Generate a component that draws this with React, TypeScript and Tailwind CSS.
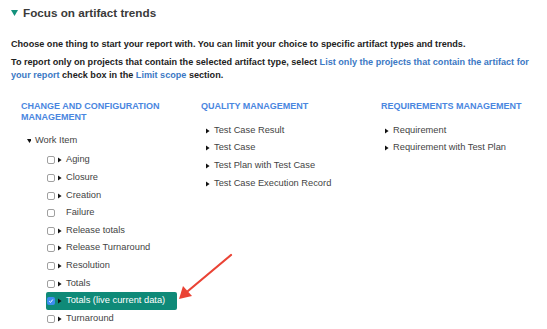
import React from 'react'

const Tri = ({ down = false, className = '' }: { down?: boolean; className?: string }) => (
  <svg width="4" height="6" viewBox="0 0 4 6" className={className}>
    {down ? <path d="M0 1 L5 1 L2.5 5 Z" fill="#111" /> : <path d="M0 0.5 L3.6 3 L0 5.5 Z" fill="#111" />}
  </svg>
)

const Box = ({ checked = false }: { checked?: boolean }) =>
  checked ? (
    <span className="flex h-[8px] w-[8px] items-center justify-center rounded-[2px] bg-[#3d8ef0]">
      <svg width="6" height="6" viewBox="0 0 6 6">
        <path d="M1.2 3.1 L2.5 4.4 L4.8 1.5" stroke="#fff" strokeWidth="1" fill="none" />
      </svg>
    </span>
  ) : (
    <span className="h-[8px] w-[8px] rounded-[2px] border border-[#a0a0a0] bg-white" />
  )

const workItems: { label: string; arrow: boolean; checked?: boolean }[] = [
  { label: 'Aging', arrow: true },
  { label: 'Closure', arrow: true },
  { label: 'Creation', arrow: true },
  { label: 'Failure', arrow: false },
  { label: 'Release totals', arrow: true },
  { label: 'Release Turnaround', arrow: true },
  { label: 'Resolution', arrow: true },
  { label: 'Totals', arrow: true },
  { label: 'Totals (live current data)', arrow: true, checked: true },
  { label: 'Turnaround', arrow: true },
]

const quality = ['Test Case Result', 'Test Case', 'Test Plan with Test Case', 'Test Case Execution Record']
const requirements = ['Requirement', 'Requirement with Test Plan']

export default function App() {
  return (
    <div className="relative h-[329px] w-[547px] overflow-hidden bg-white font-['Liberation_Sans',Arial,sans-serif] text-[#333]">
      {/* Section title */}
      <div className="flex items-center gap-[5px] pl-[11px] pt-[5px]">
        <svg width="7" height="6" viewBox="0 0 7 6">
          <path d="M0 0 L7 0 L3.5 6 Z" fill="#14917c" />
        </svg>
        <span className="text-[11.7px] font-bold leading-[15px] text-[#3a3a3a]">Focus on artifact trends</span>
      </div>

      <div className="px-[11px] pt-[18px] text-[9.1px] font-bold leading-[13px] text-[#222]">
        <p>Choose one thing to start your report with. You can limit your choice to specific artifact types and trends.</p>
        <div className="mt-[5px]">
          <p className="whitespace-nowrap">
            To report only on projects that contain the selected artifact type, select{' '}
            <span className="text-[#3b78c4]">List only the projects that contain the artifact for</span>
          </p>
          <p className="whitespace-nowrap">
            <span className="text-[#3b78c4]">your report</span> check box in the{' '}
            <span className="text-[#3b78c4]">Limit scope</span> section.
          </p>
        </div>
      </div>

      {/* Columns */}
      <div className="grid grid-cols-[180px_180px_180px] pl-[21px] pt-[19px] text-[9.3px] text-[#444]">
        <div>
          <h3 className="text-[9px] font-bold leading-[11px] text-[#4a86e0]">
            CHANGE AND CONFIGURATION
            <br />
            MANAGEMENT
          </h3>
          <div className="mt-[9px] flex h-[17.6px] items-center gap-[3px] pl-[6px]">
            <Tri down />
            <span className="ml-[1px]">Work Item</span>
          </div>
          <div className="mt-[2px]">
            {workItems.map((w) => (
              <div
                key={w.label}
                className={
                  w.checked
                    ? 'ml-[25px] flex h-[17.6px] w-[131px] items-center rounded-[2px] bg-[#0f8a78] pl-[1px] text-white'
                    : 'ml-[25px] flex h-[17.6px] items-center pl-[1px]'
                }
              >
                <Box checked={w.checked} />
                <span className="ml-[3px] w-[4px]">{w.arrow && <Tri />}</span>
                <span className="ml-[4px]">{w.label}</span>
              </div>
            ))}
          </div>
        </div>

        <div>
          <h3 className="text-[9px] font-bold leading-[11px] text-[#4a86e0]">QUALITY MANAGEMENT</h3>
          <div className="mt-[10px] pl-[5px]">
            {quality.map((q) => (
              <div key={q} className="flex h-[17.6px] items-center gap-[4px]">
                <Tri />
                <span>{q}</span>
              </div>
            ))}
          </div>
        </div>

        <div>
          <h3 className="text-[9px] font-bold leading-[11px] text-[#4a86e0]">REQUIREMENTS MANAGEMENT</h3>
          <div className="mt-[10px] pl-[4px]">
            {requirements.map((r) => (
              <div key={r} className="flex h-[17.6px] items-center gap-[4px]">
                <Tri />
                <span>{r}</span>
              </div>
            ))}
          </div>
        </div>
      </div>

      {/* Annotation arrow */}
      <svg className="absolute left-0 top-0" width="547" height="329" viewBox="0 0 547 329">
        <line x1="231" y1="255" x2="188" y2="291" stroke="#ea4335" strokeWidth="2.2" strokeLinecap="round" />
        <path d="M179 299 L183 286 L192 296 Z" fill="#ea4335" />
      </svg>
    </div>
  )
}
